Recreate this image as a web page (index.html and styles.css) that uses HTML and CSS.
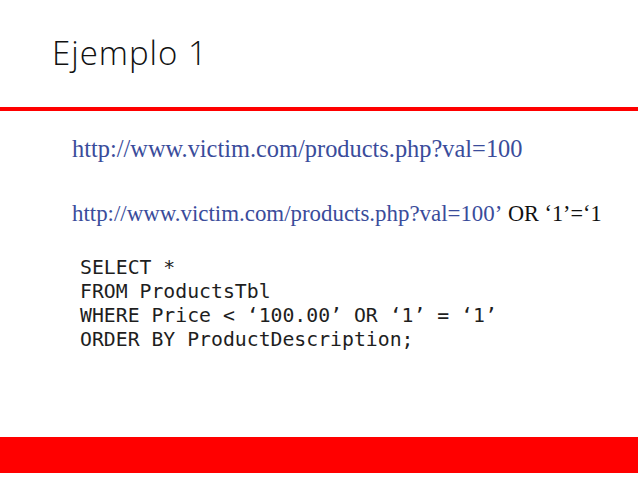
FILE: index.html
```html
<!DOCTYPE html>
<html lang="es">
<head>
<meta charset="utf-8">
<title>Ejemplo 1</title>
<link rel="stylesheet" href="styles.css">
</head>
<body>
<div class="slide">
  <header class="head">
    <h1 class="title">Ejemplo 1</h1>
  </header>
  <div class="rule"></div>
  <main class="content">
    <p class="url url-plain">http://www.victim.com/products.php?val=100</p>
    <p class="url url-inject">http://www.victim.com/products.php?val=100’<span class="inject"> OR ‘1’=‘1</span></p>
    <pre class="code">SELECT *
FROM ProductsTbl
WHERE Price &lt; ‘100.00’ OR ‘1’ = ‘1’
ORDER BY ProductDescription;</pre>
  </main>
  <div class="band"></div>
</div>
</body>
</html>
```

FILE: styles.css
```css
html, body {
  margin: 0;
  padding: 0;
  background: #ffffff;
}
.slide {
  width: 638px;
  height: 478px;
  display: flex;
  flex-direction: column;
  overflow: hidden;
}
.head {
  height: 107px;
  padding-left: 52px;
  box-sizing: border-box;
}
.title {
  margin: 0;
  padding-top: 31px;
  font-family: "Open Sans", "Liberation Sans", sans-serif;
  font-weight: 300;
  font-size: 33px;
  line-height: 44px;
  letter-spacing: 1px;
  color: #111111;
}
.rule {
  height: 4px;
  background: #ff0000;
}
.content {
  flex: 1;
  padding-left: 72px;
}
.url {
  margin: 0;
  font-family: "Liberation Serif", "Times New Roman", serif;
  line-height: 24px;
  color: #3a4c9b;
  white-space: nowrap;
}
.url-plain {
  margin-top: 26px;
  font-size: 24.4px;
}
.url-inject {
  margin-top: 41px;
  font-size: 22.9px;
}
.inject {
  color: #111111;
  font-size: 22.3px;
}
.code {
  margin: 30px 0 0 8px;
  font-family: "DejaVu Sans Mono", "Liberation Mono", monospace;
  font-size: 19.8px;
  line-height: 24px;
  color: #1e1e1e;
}
.band {
  height: 36px;
  margin-bottom: 5px;
  background: #ff0000;
}
```
